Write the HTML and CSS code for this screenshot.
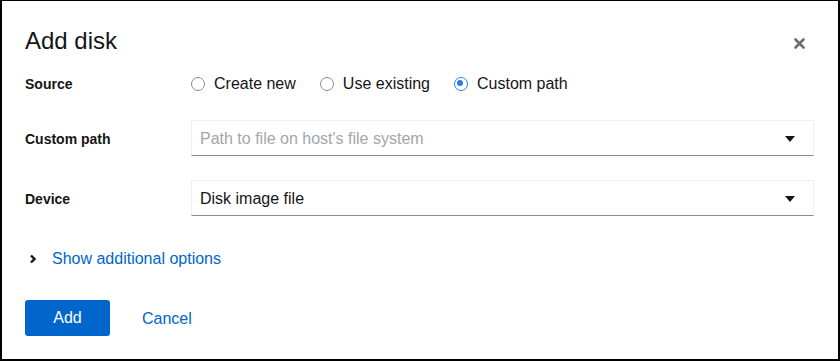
FILE: index.html
```html
<!DOCTYPE html>
<html lang="en">
<head>
    <meta charset="UTF-8">
    <title>Add disk</title>
    <link rel="stylesheet" href="styles.css">
</head>
<body>
    <div class="modal">
        <!-- Header -->
        <div class="modal-header">
            <h1>Add disk</h1>
            <button class="close-btn" aria-label="Close">
                <svg width="11" height="11" viewBox="0 0 11 11"><path d="M1.5 1.5 L9.5 9.5 M9.5 1.5 L1.5 9.5" stroke="#6a6e73" stroke-width="2.6" stroke-linecap="round"/></svg>
            </button>
        </div>

        <form class="form">
            <div class="form-row radio-row">
                <label class="form-label">Source</label>
                <div class="radios">
                    <label class="radio"><span class="dot"></span>Create new</label>
                    <label class="radio"><span class="dot"></span>Use existing</label>
                    <label class="radio"><span class="dot checked"></span>Custom path</label>
                </div>
            </div>

            <div class="form-row">
                <label class="form-label">Custom path</label>
                <div class="select">
                    <span class="placeholder">Path to file on host's file system</span>
                    <span class="caret"></span>
                </div>
            </div>

            <div class="form-row">
                <label class="form-label">Device</label>
                <div class="select">
                    <span>Disk image file</span>
                    <span class="caret"></span>
                </div>
            </div>
        </form>

        <!-- Additional options -->
        <div class="expand">
            <svg class="chevron" width="8" height="10" viewBox="0 0 8 10"><path d="M2 1.5 L5.5 5 L2 8.5" fill="none" stroke="#151515" stroke-width="2.4"/></svg>
            <a href="#">Show additional options</a>
        </div>

        <div class="footer">
            <button class="btn-primary">Add</button>
            <button class="btn-link">Cancel</button>
        </div>
    </div>
</body>
</html>
```

FILE: styles.css
```css
body {
    margin: 0;
    font-family: "Liberation Sans", Arial, sans-serif;
    color: #151515;
    background: #fff;
}

.modal {
    width: 840px;
    height: 361px;
    box-sizing: border-box;
    border: 2px solid #000;
    border-top-width: 1px;
    padding: 0 24px 0 23px;
}

.modal-header {
    display: flex;
    justify-content: space-between;
    align-items: center;
    height: 29px;
    margin-top: 25px;
}

.modal-header h1 {
    margin: 0;
    font-size: 24px;
    font-weight: normal;
    line-height: 29px;
}

.close-btn {
    background: none;
    border: none;
    padding: 0;
    margin: 8px 9px 0 0;
    cursor: pointer;
}

.form {
    margin-top: 15px;
}

.form-row {
    display: grid;
    grid-template-columns: 150px 1fr;
    column-gap: 16px;
    align-items: center;
    margin-bottom: 24px;
}

.radio-row {
    height: 26px;
    padding-top: 1px;
    box-sizing: border-box;
}

.form-label {
    font-size: 14px;
    font-weight: bold;
    padding-top: 1px;
}

.radios {
    display: flex;
    gap: 24px;
    font-size: 16px;
}

.radio {
    display: flex;
    align-items: center;
}

.dot {
    width: 14px;
    height: 14px;
    box-sizing: border-box;
    border: 1.5px solid #8a8d90;
    border-radius: 50%;
    margin: 0 9px 0 0;
    position: relative;
}

.dot.checked {
    border-color: #2b7fe0;
}

.dot.checked::after {
    content: "";
    position: absolute;
    top: 2.5px;
    left: 2.5px;
    width: 6px;
    height: 6px;
    border-radius: 50%;
    background: #2b7fe0;
}

.select {
    height: 36px;
    box-sizing: border-box;
    border: 1px solid #f0f0f0;
    border-bottom-color: #8a8d90;
    display: flex;
    align-items: center;
    justify-content: space-between;
    padding: 1px 16px 0 8px;
    font-size: 16px;
}

.placeholder {
    color: #a3a6a9;
}

.caret {
    width: 0;
    height: 0;
    border-left: 5px solid transparent;
    border-right: 5px solid transparent;
    border-top: 6px solid #151515;
    margin-right: 2px;
}

.expand {
    display: flex;
    align-items: center;
    height: 36px;
    padding-top: 1px;
    box-sizing: border-box;
}

.chevron {
    margin: 0 15px 0 4px;
}

.expand a {
    color: #0066cc;
    text-decoration: none;
    font-size: 16px;
}

.footer {
    display: flex;
    align-items: center;
    gap: 16px;
    margin-top: 24px;
}

.btn-primary {
    background-color: #0066cc;
    color: #fff;
    border: none;
    border-radius: 3px;
    width: 85px;
    height: 36px;
    padding-top: 1px;
    font-family: inherit;
    font-size: 16px;
}

.btn-link {
    background: none;
    border: none;
    color: #0066cc;
    font-family: inherit;
    font-size: 16px;
    padding: 1px 16px 0;
}
```
